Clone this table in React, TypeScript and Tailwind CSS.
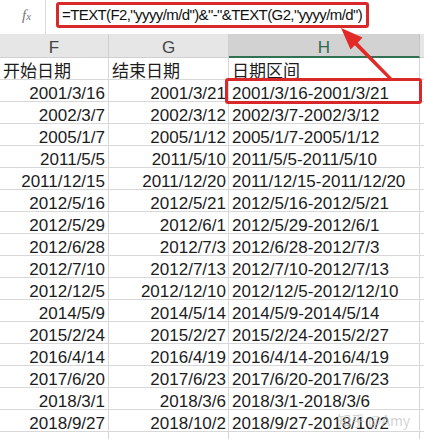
const rows: [string, string][] = [
	["2001/3/16", "2001/3/21"],
	["2002/3/7", "2002/3/12"],
	["2005/1/7", "2005/1/12"],
	["2011/5/5", "2011/5/10"],
	["2011/12/15", "2011/12/20"],
	["2012/5/16", "2012/5/21"],
	["2012/5/29", "2012/6/1"],
	["2012/6/28", "2012/7/3"],
	["2012/7/10", "2012/7/13"],
	["2012/12/5", "2012/12/10"],
	["2014/5/9", "2014/5/14"],
	["2015/2/24", "2015/2/27"],
	["2016/4/14", "2016/4/19"],
	["2017/6/20", "2017/6/23"],
	["2018/3/1", "2018/3/6"],
	["2018/9/27", "2018/10/2"],
];

const font = { fontFamily: '"Liberation Sans", "Noto Sans CJK SC", sans-serif' };

const cell = "h-[22px] shrink-0 border-b border-r border-[#d8d8d8] pt-[5px] text-[17px] leading-[17px] whitespace-nowrap";

const Row = ({ f, g, h, text }: { f: string; g: string; h: string; text?: boolean }) => (
	<div className="flex text-[#1c1c1c]">
		<div className={`${cell} w-[109px] ${text ? "pl-[3px] text-left" : "pr-[3px] text-right"}`}>{f}</div>
		<div className={`${cell} w-[120px] ${text ? "pl-[3px] text-left" : "pr-[2px] text-right"}`}>{g}</div>
		<div className={`${cell} w-[191px] pl-[3px] text-left`}>{h}</div>
		<div className={`${cell} flex-1 border-r-0`} />
	</div>
);

export default function App() {
	return (
		<div className="relative h-[439px] w-[424px] overflow-hidden bg-white" style={font}>
			{/* formula bar */}
			<div className="flex h-[34px] items-start">
				<div className="flex h-[34px] w-[46px] items-center justify-center border-r border-[#dadada] pl-[8px] pb-[4px]">
					<span className="text-[15px] italic text-[#777]" style={{ fontFamily: '"Liberation Serif", serif' }}>
						f<span className="text-[11px]">x</span>
					</span>
				</div>
				<div className="ml-[10px] mt-[2px] flex h-[26px] w-[313px] items-center rounded-[3px] border-[3px] border-[#d9282a] pl-[3px] text-[15px] tracking-[-0.6px] text-[#111]">
					=TEXT(F2,"yyyy/m/d")&amp;"-"&amp;TEXT(G2,"yyyy/m/d")
				</div>
			</div>

			{/* column headers */}
			<div className="flex h-[24px] bg-[#e6e6e6] text-[17px] leading-[17px]">
				<div className="w-[109px] border-r border-b border-[#cfcfcf] pt-[5px] text-center text-[#444]">F</div>
				<div className="w-[120px] border-r border-b border-[#cfcfcf] pt-[5px] text-center text-[#444]">G</div>
				<div className="w-[191px] border-r border-b-2 border-r-[#c4c4c4] border-b-[#2f7150] bg-[#d2d2d2] pt-[5px] text-center text-[#2f6a4c]">H</div>
				<div className="flex-1 border-b border-[#cfcfcf]" />
			</div>

			<Row f="开始日期" g="结束日期" h="日期区间" text />
			{rows.map(([f, g]) => (
				<Row key={f} f={f} g={g} h={`${f}-${g}`} />
			))}
			<Row f="" g="" h="" />

			{/* highlighted result cell */}
			<div className="absolute left-[225px] top-[78px] h-[26px] w-[197px] rounded-[3px] border-[3px] border-[#d9282a]" />

			{/* arrow */}
			<svg className="absolute left-0 top-0" width="424" height="439" viewBox="0 0 424 439">
				<polygon
					points="341,28 362.5,37.5 357.8,42.8 393,79 390.5,81 354.8,45.2 350.5,49.5"
					fill="#e22a26"
				/>
			</svg>

			{/* watermark */}
			<div className="absolute left-[337px] top-[410px] text-[14px] text-[#c4c4c4] opacity-70" style={{ fontFamily: '"Noto Sans CJK SC", sans-serif' }}>
				知乎 @Amy
			</div>
		</div>
	);
}
